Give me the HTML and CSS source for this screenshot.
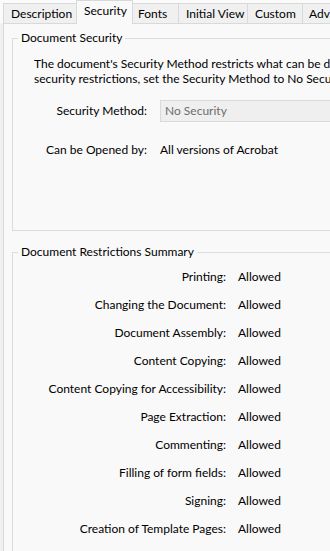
FILE: index.html
```html
<!DOCTYPE html>
<html lang="en">
<head>
<meta charset="utf-8">
<title>Document Properties - Security</title>
<link rel="stylesheet" href="styles.css">
</head>
<body>
<div class="tabs">
  <div class="tab tab-desc">Description</div>
  <div class="tab tab-sec active">Security</div>
  <div class="tab tab-fonts">Fonts</div>
  <div class="tab tab-view">Initial View</div>
  <div class="tab tab-custom">Custom</div>
  <div class="tab tab-adv">Advanced</div>
</div>
<div class="panel">
  <fieldset class="group group-security">
    <legend>Document Security</legend>
    <p class="intro">The document's Security Method restricts what can be done to the document. To remove<br>security restrictions, set the Security Method to No Security.</p>
    <div class="props">
      <span class="prop-label prop-method">Security Method:</span>
      <div class="select">No Security</div>
      <span class="prop-label">Can be Opened by:</span>
      <span class="prop-value">All versions of Acrobat</span>
    </div>
  </fieldset>
  <fieldset class="group group-restrictions">
    <legend>Document Restrictions Summary</legend>
    <dl class="summary">
      <dt>Printing:</dt><dd>Allowed</dd>
      <dt>Changing the Document:</dt><dd>Allowed</dd>
      <dt>Document Assembly:</dt><dd>Allowed</dd>
      <dt>Content Copying:</dt><dd>Allowed</dd>
      <dt>Content Copying for Accessibility:</dt><dd>Allowed</dd>
      <dt>Page Extraction:</dt><dd>Allowed</dd>
      <dt>Commenting:</dt><dd>Allowed</dd>
      <dt>Filling of form fields:</dt><dd>Allowed</dd>
      <dt>Signing:</dt><dd>Allowed</dd>
      <dt>Creation of Template Pages:</dt><dd>Allowed</dd>
    </dl>
  </fieldset>
</div>
</body>
</html>
```
FILE: styles.css
```css
html, body {
  margin: 0;
  padding: 0;
}

body {
  width: 330px;
  height: 551px;
  overflow: hidden;
  background: #f0f0f0;
  color: #000;
  font-family: Lato, "Segoe UI", "Liberation Sans", sans-serif;
  font-size: 12px;
}

.tabs {
  display: flex;
  align-items: flex-end;
  box-sizing: border-box;
  width: 700px;
  height: 23px;
  padding-left: 3px;
  background: #fbfbfb;
}

.tab {
  box-sizing: border-box;
  height: 20px;
  margin-left: -1px;
  padding-left: 7px;
  border: 1px solid #d9d9d9;
  border-bottom: 0;
  background: #f0f0f0;
  line-height: 20px;
  white-space: nowrap;
}

.tab:first-child {
  margin-left: 0;
}

.tab.active {
  position: relative;
  z-index: 1;
  height: 24px;
  margin-bottom: -1px;
  background: #f9f9f9;
  line-height: 20px;
}

.tab-desc { width: 74px; }
.tab-sec { width: 57px; }
.tab-fonts { width: 47px; padding-left: 5px; }
.tab-view { width: 70px; }
.tab-custom { width: 56px; }
.tab-adv { width: 80px; padding-left: 6px; }

.panel {
  box-sizing: border-box;
  width: 700px;
  height: 528px;
  margin-left: 3px;
  padding: 6px 0 0 8px;
  border-top: 1px solid #d9d9d9;
  border-left: 1px solid #d9d9d9;
  background: #f9f9f9;
}

.group {
  margin: 0;
  padding: 0;
  min-inline-size: 0;
  border: 1px solid #dcdcdc;
}

.group legend {
  margin-left: 5px;
  padding: 0 3px;
  line-height: 16px;
}

.group-security {
  padding-bottom: 72px;
}

.intro {
  margin: 10px 0 0 21px;
  line-height: 15px;
  white-space: nowrap;
}

.props {
  display: grid;
  grid-template-columns: 113px 300px;
  column-gap: 13px;
  row-gap: 20px;
  margin: 14px 0 0 21px;
  line-height: 16px;
}

.prop-label {
  align-self: center;
  text-align: right;
}

.select {
  box-sizing: border-box;
  height: 22px;
  padding-left: 4px;
  border: 1px solid #dadada;
  background: #efefef;
  color: #6d6d6d;
  line-height: 20px;
}

.group-restrictions {
  margin-top: 13px;
  padding: 3px 0 20px;
}

.summary {
  display: grid;
  grid-template-columns: 213px auto;
  column-gap: 12px;
  margin: 0;
  line-height: 28px;
}

.summary dt {
  text-align: right;
  white-space: nowrap;
}

.summary dd {
  margin: 0;
}
```
